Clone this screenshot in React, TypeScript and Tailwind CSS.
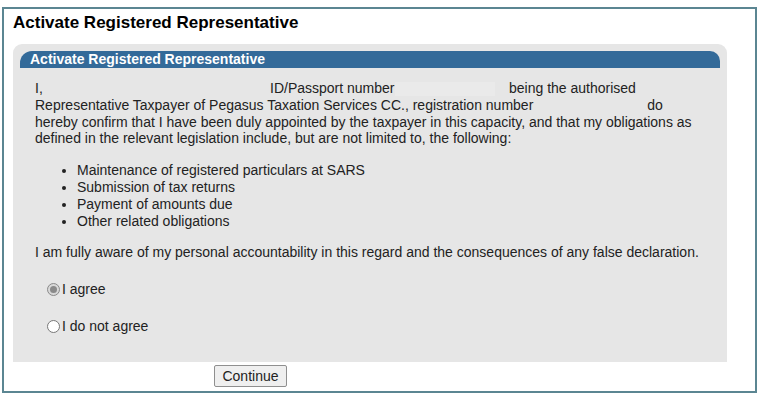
export default function App() {
  const font = { fontFamily: '"Liberation Sans", Arial, sans-serif' };
  return (
    <div className="w-[768px] h-[398px] bg-white pt-[7px] pl-[2px]" style={font}>
      <div className="w-[755px] h-[386px] border-2 border-[#5b8692] pl-[9px] pr-[28px]">
        <h1 className="pt-[4px] h-[35px] text-[17px] font-bold text-black leading-[20px]">
          Activate Registered Representative
        </h1>
        <div className="h-[318px] rounded-t-[9px] bg-[#e6e6e6] px-[7px] pt-[7px]">
          <div className="h-[17px] rounded-tl-[12px] rounded-tr-[10px] bg-[#336a99] pl-[10px] text-[14px] font-bold leading-[17px] text-white">
            Activate Registered Representative
          </div>
          <div className="pl-[15px] pr-[6px] pt-[12px] text-[14px] leading-[16.8px] text-[#222]">
            <p>
              <span className="inline-block w-[235px]">I,</span>
              <span className="inline-block w-[239px]">
                ID/Passport number
                <span className="inline-block w-[100px] h-[14px] align-middle bg-[#eaeaea]" />
              </span>
              being the authorised
              <br />
              Representative Taxpayer of Pegasus Taxation Services CC., registration number
              <span className="inline-block w-[114px]" />
              do
              <br />
              hereby confirm that I have been duly appointed by the taxpayer in this capacity, and that my obligations as
              <br />
              defined in the relevant legislation include, but are not limited to, the following:
            </p>
            <ul className="mt-[15px] list-disc pl-[42px]">
              <li>Maintenance of registered particulars at SARS</li>
              <li>Submission of tax returns</li>
              <li>Payment of amounts due</li>
              <li>Other related obligations</li>
            </ul>
            <p className="mt-[15px]">
              I am fully aware of my personal accountability in this regard and the consequences of any false declaration.
            </p>
            <div className="mt-[20px] flex items-center pl-[12px]">
              <span className="mr-[2px] flex h-[13px] w-[13px] items-center justify-center rounded-full border border-[#8a8a8a] bg-[#d8d8d8]">
                <span className="h-[7px] w-[7px] rounded-full bg-[#8a8a8a]" />
              </span>
              <span>I agree</span>
            </div>
            <div className="mt-[20px] flex items-center pl-[12px]">
              <span className="mr-[2px] h-[13px] w-[13px] rounded-full border border-[#777] bg-white" />
              <span>I do not agree</span>
            </div>
          </div>
        </div>
        <div className="pl-[201px] pt-[2px]">
          <button className="h-[22px] w-[73px] rounded-[2px] border border-[#8f8f8f] bg-[#efefef] text-[14px] leading-[20px] text-[#222]">
            Continue
          </button>
        </div>
      </div>
    </div>
  );
}
